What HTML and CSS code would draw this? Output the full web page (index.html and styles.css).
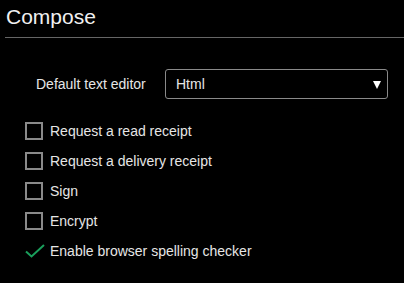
FILE: index.html
```html
<!DOCTYPE html>
<html>
<head>
<meta charset="utf-8">
<link rel="stylesheet" href="styles.css">
</head>
<body>
<div class="page">
  <div class="header"><h1 class="title">Compose</h1></div>
  <div class="field">
    <label class="field-label">Default text editor</label>
    <div class="select">
      <span class="select-value">Html</span>
      <span class="select-arrow"></span>
    </div>
  </div>
  <ul class="options">
    <li class="option"><span class="box"></span><span class="option-text">Request a read receipt</span></li>
    <li class="option"><span class="box"></span><span class="option-text">Request a delivery receipt</span></li>
    <li class="option"><span class="box"></span><span class="option-text">Sign</span></li>
    <li class="option"><span class="box"></span><span class="option-text">Encrypt</span></li>
    <li class="option"><span class="check"><svg width="20" height="14" viewBox="0 0 20 14"><path d="M1 7.5 L6.5 12.5 L19 1" fill="none" stroke="#1a9f5c" stroke-width="2"/></svg></span><span class="option-text">Enable browser spelling checker</span></li>
  </ul>
</div>
</body>
</html>
```
FILE: styles.css
```css
html, body {
  margin: 0;
  padding: 0;
  background: #000;
}
body {
  font-family: "Liberation Sans", Arial, sans-serif;
  color: #e6e6e6;
  font-size: 14px;
}
.page {
  width: 404px;
  height: 283px;
}
.header {
  margin-left: 5px;
  border-bottom: 1px solid #666;
  height: 38px;
  box-sizing: border-box;
}
.title {
  margin: 0;
  padding: 4px 0 0 1px;
  font-size: 21px;
  font-weight: 400;
  line-height: 26px;
  color: #f0f0f0;
}
.field {
  display: flex;
  align-items: center;
  margin-top: 31px;
  padding-left: 36px;
  gap: 20px;
}
.field-label {
  width: 109px;
  white-space: nowrap;
}
.select {
  width: 223px;
  height: 30px;
  box-sizing: border-box;
  border: 1px solid #8a8a8a;
  border-radius: 3px;
  display: flex;
  align-items: center;
  justify-content: space-between;
  padding: 0 6px 0 10px;
}
.select-arrow {
  width: 0;
  height: 0;
  border-left: 4px solid transparent;
  border-right: 4px solid transparent;
  border-top: 8px solid #fff;
  margin-top: 1px;
}
.options {
  list-style: none;
  margin: 17px 0 0 0;
  padding: 0 0 0 25px;
}
.option {
  display: flex;
  align-items: center;
  height: 30px;
}
.box {
  width: 18px;
  height: 18px;
  box-sizing: border-box;
  border: 2px solid #8a8a8a;
  margin-right: 7px;
  flex: none;
}
.check {
  width: 20px;
  height: 14px;
  margin-right: 5px;
  flex: none;
}
.check svg {
  display: block;
}
```
